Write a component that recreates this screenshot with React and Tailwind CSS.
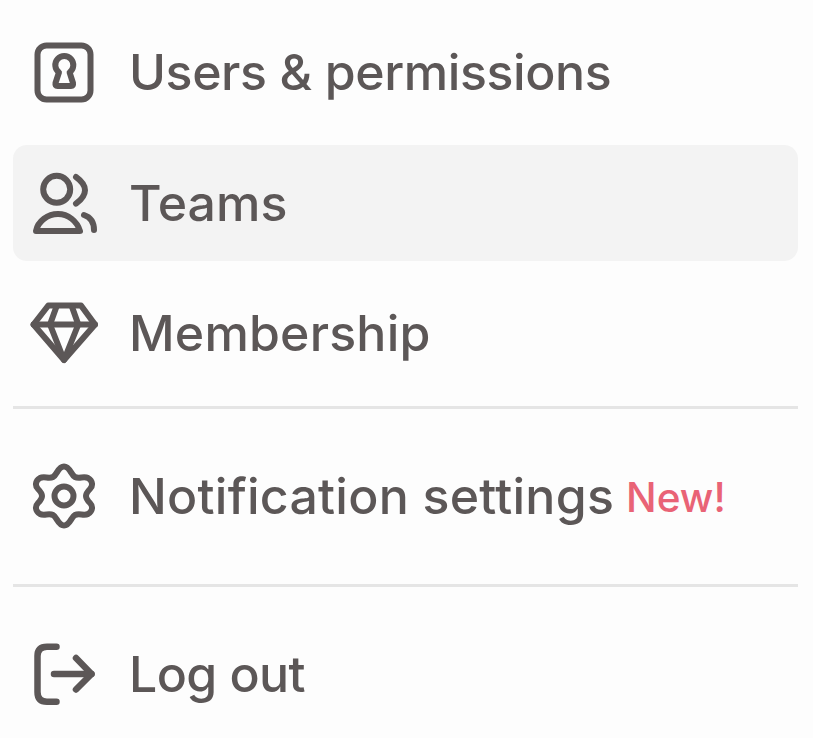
import React from "react";

const KeyIcon = () => (
  <svg width="72" height="72" viewBox="0 0 72 72" fill="none" stroke="currentColor" strokeWidth="6" strokeLinecap="round" strokeLinejoin="round">
    <rect x="9.5" y="9.5" width="53" height="54" rx="9" />
    <path d="M31 36.3A9 9 0 1 1 41.6 36.3L45 47Q45.5 50 43 50H29.5Q27 50 27.5 47Z" />
  </svg>
);

const TeamsIcon = () => (
  <svg width="72" height="72" viewBox="0 0 72 72" fill="none" stroke="currentColor" strokeWidth="6" strokeLinecap="round" strokeLinejoin="round">
    <circle cx="28.7" cy="22.3" r="13.5" />
    <path d="M48 10Q66 23 48 36.7" />
    <path d="M8 64C10 54 20 47 30 47C40 47 49 54 52 64Z" />
    <path d="M56 48C62 50 66 55 66 63" />
  </svg>
);

const DiamondIcon = () => (
  <svg width="72" height="72" viewBox="0 0 72 72" fill="none" stroke="currentColor" strokeWidth="6" strokeLinecap="round" strokeLinejoin="round">
    <path d="M20.3 8.5H53L67 27.5L36 63L5.5 27.5Z" />
    <path d="M5.5 27.5H67" />
    <path d="M28.7 9L22 27.5L36 63L50.3 27.5L43.7 9" />
  </svg>
);

const GearIcon = () => (
  <svg width="72" height="72" viewBox="0 0 72 72" fill="none" stroke="currentColor" strokeWidth="6" strokeLinecap="round" strokeLinejoin="round">
    <circle cx="36" cy="36" r="9.5" />
    <path d="M25 17C29 15 30 6.5 36 6.5C42 6.5 43 15 47 17C51 19 56 16 60 18C65 21 65 26 62 29C60 31 58 33 58 36C58 39 60 41 62 43C65 46 65 51 60 54C56 56 51 53 47 55C43 57 42 65.5 36 65.5C30 65.5 29 57 25 55C21 53 16 56 12 54C7 51 7 46 10 43C12 41 14 39 14 36C14 33 12 31 10 29C7 26 7 21 12 18C16 16 21 19 25 17Z" />
  </svg>
);

const LogoutIcon = () => (
  <svg width="72" height="72" viewBox="0 0 72 72" fill="none" stroke="currentColor" strokeWidth="6.5" strokeLinecap="round" strokeLinejoin="round">
    <path d="M28.5 8.7H19Q9.5 8.7 9.5 18V54Q9.5 63.7 19 63.7H28.5" />
    <path d="M26 36H63.5" />
    <path d="M48 20L63.5 36L48 51.5" />
  </svg>
);

const MenuItem = ({ icon, label, active, badge, tracking }) => (
  <a
    className={`flex h-[116px] items-center gap-[29px] rounded-[14px] pl-[15px] ${
      active ? "bg-[#f3f3f3]" : ""
    }`}
  >
    {icon}
    <span className={`whitespace-nowrap text-[50px] font-[450] leading-none ${tracking}`}>
      {label}
    </span>
    {badge && (
      <span className="-ml-[17px] mt-[5px] text-[40.5px] font-[450] leading-none text-[#e96376]">
        {badge}
      </span>
    )}
  </a>
);

export default function App() {
  return (
    <div className="h-[738px] overflow-hidden bg-[#fdfdfd] px-[13px] pr-[15px] pt-[14px] font-['Inter',sans-serif] text-[#5c5757]">
      <div className="flex flex-col gap-[14.5px]">
        <MenuItem icon={<KeyIcon />} label="Users & permissions" tracking="tracking-[-0.4px]" />
        <MenuItem icon={<TeamsIcon />} label="Teams" active tracking="tracking-[0px]" />
        <MenuItem icon={<DiamondIcon />} label="Membership" tracking="tracking-[0.2px]" />
      </div>
      <div className="mb-[29px] mt-[15px] h-[3px] bg-[#e5e5e5]" />
      <MenuItem icon={<GearIcon />} label="Notification settings" tracking="tracking-[0.25px]" badge="New!" />
      <div className="mb-[29px] mt-[30px] h-[3px] bg-[#e5e5e5]" />
      <MenuItem icon={<LogoutIcon />} label="Log out" tracking="tracking-[-0.6px]" />
    </div>
  );
}
